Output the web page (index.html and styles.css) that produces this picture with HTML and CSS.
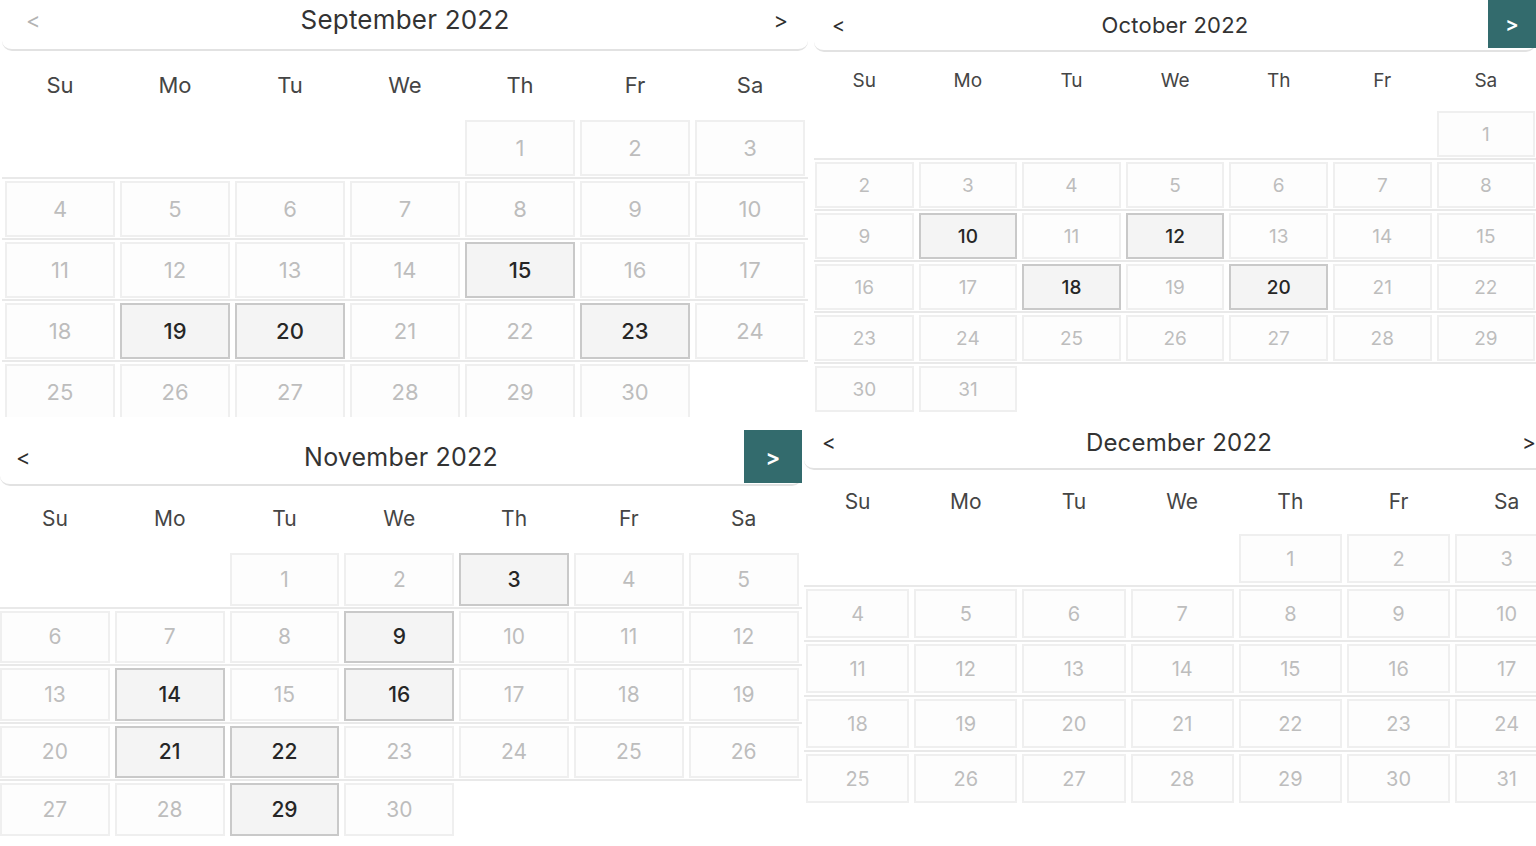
FILE: index.html
```html
<!DOCTYPE html>
<html lang="en">
<head>
<meta charset="utf-8">
<title>Calendars</title>
<link rel="stylesheet" href="styles.css">
</head>
<body>
<section class="cal sep">
  <header class="cal-head">
    <span class="nav prev muted">&lt;</span>
    <h2 class="title">September 2022</h2>
    <span class="nav next">&gt;</span>
  </header>
  <div class="weekdays"><span>Su</span><span>Mo</span><span>Tu</span><span>We</span><span>Th</span><span>Fr</span><span>Sa</span></div>
  <div class="weeks">
    <div class="week"><span class="day empty"></span><span class="day empty"></span><span class="day empty"></span><span class="day empty"></span><span class="day">1</span><span class="day">2</span><span class="day">3</span></div>
    <div class="week"><span class="day">4</span><span class="day">5</span><span class="day">6</span><span class="day">7</span><span class="day">8</span><span class="day">9</span><span class="day">10</span></div>
    <div class="week"><span class="day">11</span><span class="day">12</span><span class="day">13</span><span class="day">14</span><span class="day sel">15</span><span class="day">16</span><span class="day">17</span></div>
    <div class="week"><span class="day">18</span><span class="day sel">19</span><span class="day sel">20</span><span class="day">21</span><span class="day">22</span><span class="day sel">23</span><span class="day">24</span></div>
    <div class="week"><span class="day">25</span><span class="day">26</span><span class="day">27</span><span class="day">28</span><span class="day">29</span><span class="day">30</span><span class="day empty"></span></div>
  </div>
</section>

<section class="cal oct">
  <header class="cal-head">
    <span class="nav prev">&lt;</span>
    <h2 class="title">October 2022</h2>
    <span class="nav next active">&gt;</span>
  </header>
  <div class="weekdays"><span>Su</span><span>Mo</span><span>Tu</span><span>We</span><span>Th</span><span>Fr</span><span>Sa</span></div>
  <div class="weeks">
    <div class="week"><span class="day empty"></span><span class="day empty"></span><span class="day empty"></span><span class="day empty"></span><span class="day empty"></span><span class="day empty"></span><span class="day">1</span></div>
    <div class="week"><span class="day">2</span><span class="day">3</span><span class="day">4</span><span class="day">5</span><span class="day">6</span><span class="day">7</span><span class="day">8</span></div>
    <div class="week"><span class="day">9</span><span class="day sel">10</span><span class="day">11</span><span class="day sel">12</span><span class="day">13</span><span class="day">14</span><span class="day">15</span></div>
    <div class="week"><span class="day">16</span><span class="day">17</span><span class="day sel">18</span><span class="day">19</span><span class="day sel">20</span><span class="day">21</span><span class="day">22</span></div>
    <div class="week"><span class="day">23</span><span class="day">24</span><span class="day">25</span><span class="day">26</span><span class="day">27</span><span class="day">28</span><span class="day">29</span></div>
    <div class="week last"><span class="day">30</span><span class="day">31</span><span class="day empty"></span><span class="day empty"></span><span class="day empty"></span><span class="day empty"></span><span class="day empty"></span></div>
  </div>
</section>

<section class="cal nov">
  <header class="cal-head">
    <span class="nav prev">&lt;</span>
    <h2 class="title">November 2022</h2>
    <span class="nav next active">&gt;</span>
  </header>
  <div class="weekdays"><span>Su</span><span>Mo</span><span>Tu</span><span>We</span><span>Th</span><span>Fr</span><span>Sa</span></div>
  <div class="weeks">
    <div class="week"><span class="day empty"></span><span class="day empty"></span><span class="day">1</span><span class="day">2</span><span class="day sel">3</span><span class="day">4</span><span class="day">5</span></div>
    <div class="week"><span class="day">6</span><span class="day">7</span><span class="day">8</span><span class="day sel">9</span><span class="day">10</span><span class="day">11</span><span class="day">12</span></div>
    <div class="week"><span class="day">13</span><span class="day sel">14</span><span class="day">15</span><span class="day sel">16</span><span class="day">17</span><span class="day">18</span><span class="day">19</span></div>
    <div class="week"><span class="day">20</span><span class="day sel">21</span><span class="day sel">22</span><span class="day">23</span><span class="day">24</span><span class="day">25</span><span class="day">26</span></div>
    <div class="week last"><span class="day">27</span><span class="day">28</span><span class="day sel">29</span><span class="day">30</span><span class="day empty"></span><span class="day empty"></span><span class="day empty"></span></div>
  </div>
</section>

<section class="cal dec">
  <header class="cal-head">
    <span class="nav prev">&lt;</span>
    <h2 class="title">December 2022</h2>
    <span class="nav next">&gt;</span>
  </header>
  <div class="weekdays"><span>Su</span><span>Mo</span><span>Tu</span><span>We</span><span>Th</span><span>Fr</span><span>Sa</span></div>
  <div class="weeks">
    <div class="week"><span class="day empty"></span><span class="day empty"></span><span class="day empty"></span><span class="day empty"></span><span class="day">1</span><span class="day">2</span><span class="day">3</span></div>
    <div class="week"><span class="day">4</span><span class="day">5</span><span class="day">6</span><span class="day">7</span><span class="day">8</span><span class="day">9</span><span class="day">10</span></div>
    <div class="week"><span class="day">11</span><span class="day">12</span><span class="day">13</span><span class="day">14</span><span class="day">15</span><span class="day">16</span><span class="day">17</span></div>
    <div class="week"><span class="day">18</span><span class="day">19</span><span class="day">20</span><span class="day">21</span><span class="day">22</span><span class="day">23</span><span class="day">24</span></div>
    <div class="week last"><span class="day">25</span><span class="day">26</span><span class="day">27</span><span class="day">28</span><span class="day">29</span><span class="day">30</span><span class="day">31</span></div>
  </div>
</section>
</body>
</html>
```

FILE: styles.css
```css
html, body {
  margin: 0;
  padding: 0;
  background: #ffffff;
  overflow: hidden;
}

body {
  position: relative;
  width: 1536px;
  height: 846px;
  font-family: Inter, "Noto Sans", sans-serif;
  color: #333333;
}

/* each calendar is a separate screenshot placed on the canvas */
.cal {
  position: absolute;
  overflow: hidden;
  display: flex;
  flex-direction: column;
  background: #ffffff;
}

.sep { left: 2px;   top: 0;     width: 806px; height: 417px;
  --head-h: 51px; --head-pb: 10px; --title-fs: 26px; --nav-fs: 22px; --nav-pl: 24px; --nav-pr: 20px;
  --wd-h: 67px; --wd-fs: 22px; --day-fs: 22px;
  --pl: 3px; --cw: 110px; --gap: 5px; --ch: 56px; --pb: 1px; }

.oct { left: 814px; top: 0;     width: 722px; height: 414px;
  --head-h: 52px; --head-pb: 0px; --title-fs: 22px; --nav-fs: 20px; --nav-pl: 18px; --nav-pr: 0px;
  --btn-w: 48px; --btn-h: 48px;
  --wd-h: 57px; --wd-fs: 19px; --day-fs: 19px;
  --pl: 1px; --cw: 98.6px; --gap: 5px; --ch: 46px; --pb: 1px; }

.nov { left: 0;     top: 430px; width: 802px; height: 412px;
  --head-h: 56px; --head-pb: 0px; --title-fs: 25px; --nav-fs: 22px; --nav-pl: 16px; --nav-pr: 0px;
  --btn-w: 58px; --btn-h: 53px;
  --wd-h: 65px; --wd-fs: 21px; --day-fs: 21px;
  --pl: 0px; --cw: 109.8px; --gap: 5px; --ch: 52.5px; --pb: 1px; }

.dec { left: 804px; top: 420px; width: 750px; height: 426px;
  --head-h: 50px; --head-pb: 4px; --title-fs: 24px; --nav-fs: 21px; --nav-pl: 18px; --nav-pr: 18px;
  --wd-h: 62px; --wd-fs: 21px; --day-fs: 20px;
  --pl: 2px; --cw: 103.2px; --gap: 5px; --ch: 49px; --pb: 2px; }

/* header */
.cal-head {
  flex: none;
  height: var(--head-h);
  box-sizing: border-box;
  padding-bottom: var(--head-pb);
  display: grid;
  grid-template-columns: 1fr auto 1fr;
  align-items: center;
  border-bottom: 2px solid #e2e2e2;
  border-radius: 0 0 10px 10px;
}

.title {
  margin: 0;
  font-size: var(--title-fs);
  font-weight: 400;
  color: #333333;
  letter-spacing: 0.2px;
  white-space: nowrap;
}

.nav {
  font-size: var(--nav-fs);
  color: #2e2e2e;
  line-height: 1;
}

.nav.prev {
  justify-self: start;
  padding-left: var(--nav-pl);
}

.nav.next {
  justify-self: end;
  padding-right: var(--nav-pr);
}

.nav.muted {
  color: #b3b3b3;
}

.nav.active {
  align-self: start;
  width: var(--btn-w);
  height: var(--btn-h);
  display: flex;
  align-items: center;
  justify-content: center;
  background: #336b6d;
  color: #ffffff;
  font-weight: 600;
  padding-right: 0;
}

/* weekday names */
.weekdays {
  flex: none;
  height: var(--wd-h);
  display: grid;
  grid-template-columns: repeat(7, var(--cw));
  column-gap: var(--gap);
  padding-left: var(--pl);
  align-items: center;
  justify-items: center;
  font-size: var(--wd-fs);
  color: #454545;
}

/* weeks */
.week {
  display: grid;
  grid-template-columns: repeat(7, var(--cw));
  column-gap: var(--gap);
  padding: 2px 0 var(--pb) var(--pl);
  border-bottom: 2px solid #e9e9e9;
}

.week.last {
  border-bottom-color: transparent;
}

.day {
  height: var(--ch);
  box-sizing: border-box;
  display: flex;
  align-items: center;
  justify-content: center;
  border: 2px solid #efefef;
  background: #fdfdfd;
  color: #bdbdbd;
  font-size: var(--day-fs);
}

.day.sel {
  background: #f4f4f4;
  border-color: #c9c9c9;
  color: #262626;
  font-weight: 500;
}

.day.empty {
  border-color: transparent;
  background: transparent;
}
```
